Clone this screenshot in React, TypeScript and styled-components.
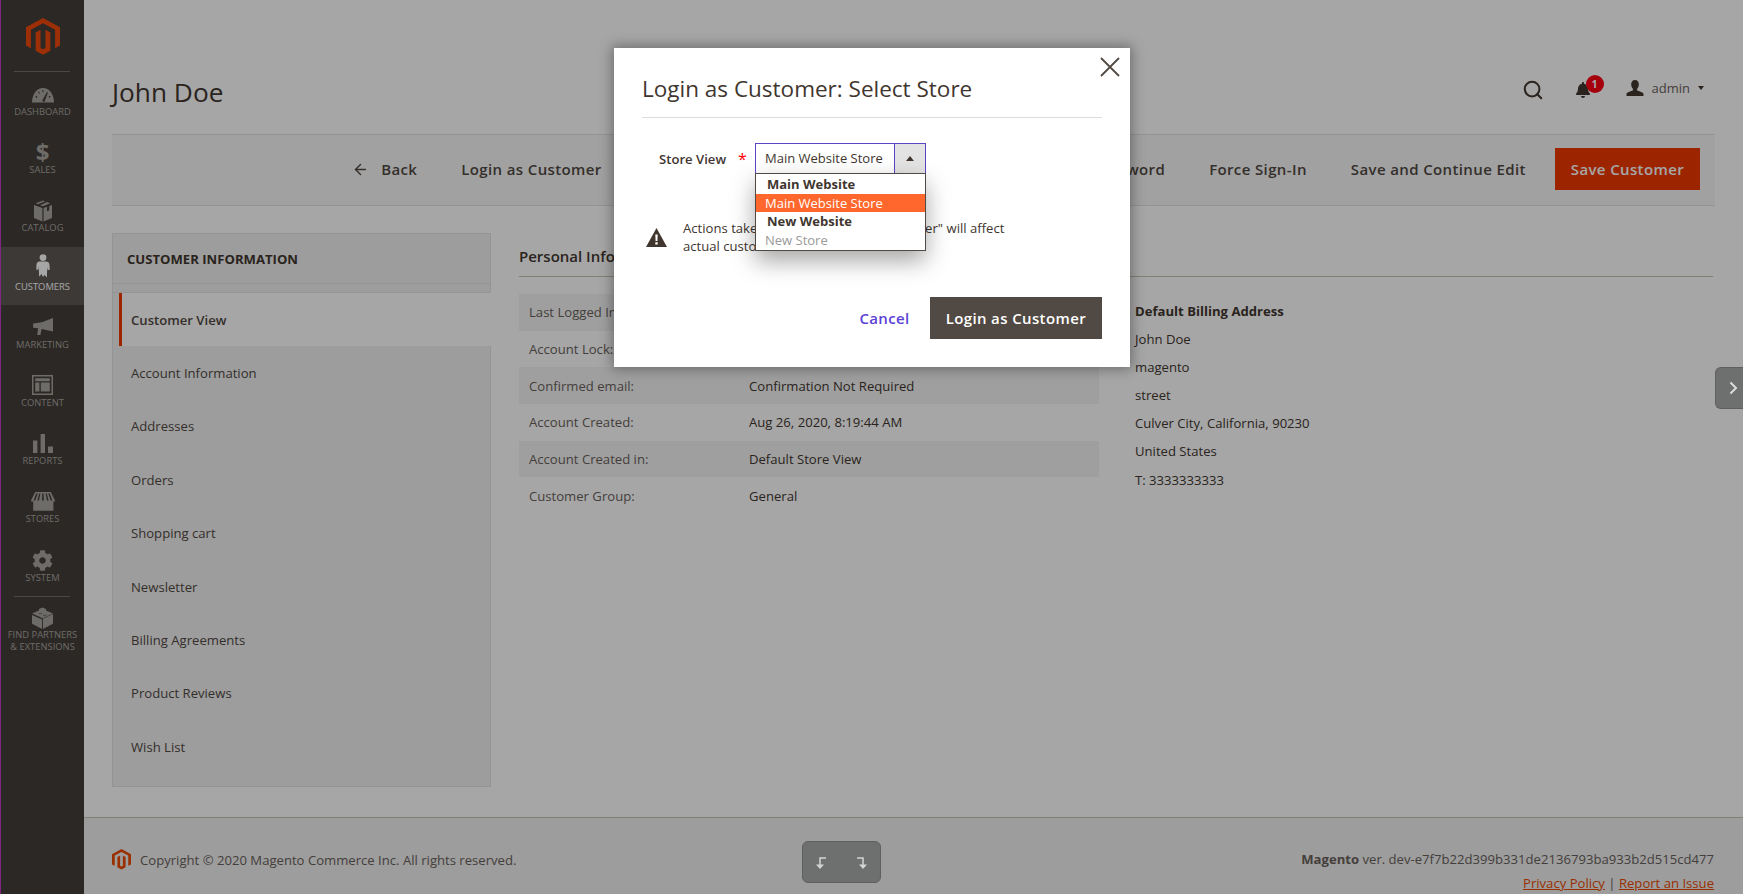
import React from "react";
import styled, { createGlobalStyle } from "styled-components";
import { FaBell, FaCog } from "react-icons/fa";
import { Search, ArrowLeft } from "lucide-react";

const GlobalStyle = createGlobalStyle`
  html, body {
    margin: 0;
    padding: 0;
    height: 894px;
    overflow: hidden;
    background: #fff;
    font-family: "Open Sans", "Liberation Sans", sans-serif;
    color: #41362f;
  }
  * { box-sizing: border-box; }
`;

const MagentoLogo = ({ size, color }: { size: number; color: string }) => (
  <svg width={size} height={size * 1.08} viewBox="1.6 0 20.8 24" preserveAspectRatio="none">
    <path fill={color} d="M12 0 1.6 6v12l3 1.7V7.7L12 3.5l7.4 4.2v12l3-1.7V6z" />
    <path fill={color} d="M13.5 19.6 12 20.5l-1.5-.9V7.7L7.5 9.4v12L12 24l4.5-2.6v-12l-3-1.7z" />
  </svg>
);

const GaugeIcon = () => (
  <svg width="22" height="16" viewBox="0 0 22 16">
    <path fill="currentColor" d="M0 15.5C0 7 5 1 11 1s11 6 11 14.5z" />
    <path fill="#433e3a" d="M10 14 15 5l1 .5-3.6 9.5zM3.2 9.4l1-.6 1.4 1.4-.8.7zM10.5 3h1v2h-1zM6 5l.9-.5 1 1.7-.9.5zM17.8 8.8l1 .6-1.6 1.5-.7-.8z" />
  </svg>
);

const BoxIcon = () => (
  <svg width="20" height="22" viewBox="0 0 20 22">
    <path fill="currentColor" d="M2.8 3.2 10 .5l2 .8L5 4.3zM7 5.2 14.2 2l3 1.2L10 6.2zM1 5l8.4 3v13.4L1 18zM19 5v13l-8.4 3.4V8l3.4-1.2v4.4l2.2-1V6z" />
  </svg>
);

const PersonSvg = styled.svg`
  margin-top: -6px;
`;

const PersonIcon = () => (
  <PersonSvg width="14" height="24" viewBox="0 0 14 24">
    <circle fill="currentColor" cx="7" cy="3.6" r="3.4" />
    <path fill="currentColor" d="M3.6 7.6h6.8c1.8.3 3 1.5 3.1 3.2l.3 5-2.2.3-.4-3.3-.3 10.6-2.4-2.4L7 23l-1.5-3-2.4 2.8-.4-10.6-.4 3.6-2.1-.3.3-5c.1-1.6 1.3-2.6 3.1-2.9z" />
  </PersonSvg>
);

const MegaphoneIcon = () => (
  <svg width="22" height="18" viewBox="0 0 22 18">
    <path fill="currentColor" d="M21 0v13.5L9.6 11 8.4 17H5.2l.9-6.8-5-.4V5.4L10 4.2z" />
  </svg>
);

const ContentIcon = () => (
  <svg width="21" height="20" viewBox="0 0 21 20">
    <path fill="currentColor" fillRule="evenodd" d="M0 0h21v20H0zM1.5 1.5v17h18v-17zM3.2 3.2h14.6v3H3.2zM3.2 7.6h4.2v9H3.2zM8.8 7.6h9v9h-9z" />
  </svg>
);

const BarsIcon = () => (
  <svg width="20" height="19" viewBox="0 0 20 19">
    <path fill="currentColor" d="M0 6.5h4.4V19H0zM7.6 0H12v19H7.6zM15 12.5h5V19h-5z" />
  </svg>
);

const StoreIcon = () => (
  <svg width="24" height="19" viewBox="0 0 24 19">
    <path fill="currentColor" fillRule="evenodd" d="M4.2 0h15.6L24 8.6c0 .8-.8 1.2-1.6 1.2v9H2.2V9.8C.8 9.8 0 9.4 0 8.6zM5.2 1.6 2.6 8.4h1.6l2.6-6.8zM8.2 1.6 6.4 8.4H8l1.4-6.8zM11.2 1.6 11 8.4h1.8l-.2-6.8zM14.6 1.6 16 8.4h1.6l-1.8-6.8zM17.2 1.6l2.6 6.8h1.6l-2.6-6.8z" />
  </svg>
);

const BrickIcon = () => (
  <svg width="21" height="22" viewBox="0 0 21 22">
    <path fill="currentColor" d="M0 6.6 7 3.4V2l3.5-1.6L14 2v1.4l7 3.2v10.2L10.9 22V11.8l-3-1.2v-1l-.8.3zM0 8l10 4.4V22L0 16.8z" />
    <path fill="none" stroke="#433e3a" strokeWidth=".6" d="M6.6 6.2c1 .6 2.6.6 3.6 0M11 8c1 .6 2.6.6 3.6 0M0 6.8l10.4 4.8L21 6.8" />
  </svg>
);

const WarningIcon = () => (
  <svg width="21" height="19" viewBox="0 0 21 19">
    <path fill="#41362f" fillRule="evenodd" d="M10.5 0 21 19H0zM9.3 6.5l.3 6.6h1.8l.3-6.6zM9.3 14.3v2.3h2.4v-2.3z" />
  </svg>
);

const UserIcon = () => (
  <svg width="18" height="16" viewBox="0 0 18 16">
    <path fill="#41362f" d="M9 0c2.4 0 3.8 1.7 3.8 4.2 0 2-.8 3.6-1.7 4.6v1.6c1.8.9 5.4 1.2 6.4 3V16H.5v-2.6c1-1.8 4.6-2.1 6.4-3V8.8C6 7.8 5.2 6.2 5.2 4.2 5.2 1.7 6.6 0 9 0z" />
  </svg>
);

const DollarGlyph = styled.span`
  margin-top: -2px;
  font-size: 24px;
  font-weight: 700;
  line-height: 21px;
`;

const menuItems = [
  { label: "Dashboard", icon: <GaugeIcon /> },
  { label: "Sales", icon: <DollarGlyph>$</DollarGlyph> },
  { label: "Catalog", icon: <BoxIcon /> },
  { label: "Customers", icon: <PersonIcon />, active: true },
  { label: "Marketing", icon: <MegaphoneIcon /> },
  { label: "Content", icon: <ContentIcon /> },
  { label: "Reports", icon: <BarsIcon /> },
  { label: "Stores", icon: <StoreIcon /> },
  { label: "System", icon: <FaCog size={21} /> },
];

const tabs = [
  "Customer View",
  "Account Information",
  "Addresses",
  "Orders",
  "Shopping cart",
  "Newsletter",
  "Billing Agreements",
  "Product Reviews",
  "Wish List",
];

const details = [
  ["Last Logged In:", "Never (Offline)"],
  ["Account Lock:", "Unlocked"],
  ["Confirmed email:", "Confirmation Not Required"],
  ["Account Created:", "Aug 26, 2020, 8:19:44 AM"],
  ["Account Created in:", "Default Store View"],
  ["Customer Group:", "General"],
];

const address = ["John Doe", "magento", "street", "Culver City, California, 90230", "United States", "T: 3333333333"];

const App = () => {
  return (
    <>
      <GlobalStyle />
      <Page>
        <Sidebar>
          <LogoBox>
            <MagentoLogo size={34} color="#f1490c" />
          </LogoBox>
          <Separator />
          {menuItems.map((item) => (
            <MenuItem key={item.label} $active={item.active}>
              <MenuIcon>{item.icon}</MenuIcon>
              <span>{item.label}</span>
            </MenuItem>
          ))}
          <Separator />
          <PartnersItem>
            <MenuIcon>
              <BrickIcon />
            </MenuIcon>
            <span>
              Find Partners
              <br />& Extensions
            </span>
          </PartnersItem>
        </Sidebar>

        <Main>
          <PageHeader>
            <Title>John Doe</Title>
            <HeaderTools>
              <Search size={22} strokeWidth={2.2} color="#41362f" />
              <BellWrap>
                <FaBell size={16} color="#41362f" />
                <Badge>1</Badge>
              </BellWrap>
              <UserMenu>
                <UserIcon />
                <span>admin</span>
                <Caret />
              </UserMenu>
            </HeaderTools>
          </PageHeader>

          <Toolbar>
            <ToolbarButton>
              <ArrowLeft size={17} strokeWidth={2} />
              Back
            </ToolbarButton>
            <ToolbarButton>Login as Customer</ToolbarButton>
            <ToolbarButton>Delete Customer</ToolbarButton>
            <HiddenGapButton>Create Order</HiddenGapButton>
            <ToolbarButton>Reset Password</ToolbarButton>
            <ToolbarButton>Force Sign-In</ToolbarButton>
            <ToolbarButton>Save and Continue Edit</ToolbarButton>
            <PrimaryButton>Save Customer</PrimaryButton>
          </Toolbar>

          <Columns>
            <TabsPanel>
              <TabsTitle>Customer Information</TabsTitle>
              <TabsList>
                {tabs.map((tab, i) => (
                  <TabItem key={tab} $active={i === 0}>
                    {tab}
                  </TabItem>
                ))}
              </TabsList>
            </TabsPanel>

            <Details>
              <DetailsHeading>Personal Information</DetailsHeading>
              <DetailsBody>
                <InfoTable>
                  {details.map(([label, value]) => (
                    <InfoRow key={label}>
                      <InfoLabel>{label}</InfoLabel>
                      <span>{value}</span>
                    </InfoRow>
                  ))}
                </InfoTable>
                <Address>
                  <strong>Default Billing Address</strong>
                  {address.map((line) => (
                    <div key={line}>{line}</div>
                  ))}
                </Address>
              </DetailsBody>
            </Details>
          </Columns>

          <Footer>
            <Copyright>
              <MagentoLogo size={19} color="#eb4a02" />
              Copyright © 2020 Magento Commerce Inc. All rights reserved.
            </Copyright>
            <Legal>
              <div>
                <strong>Magento</strong> ver. dev-e7f7b22d399b331de2136793ba933b2d515cd477
              </div>
              <div>
                <FooterLink>Privacy Policy</FooterLink> | <FooterLink>Report an Issue</FooterLink>
              </div>
            </Legal>
          </Footer>
        </Main>

        <Overlay />

        <UndoBar>
          <svg width="11" height="13" viewBox="0 0 11 13">
            <path fill="none" stroke="#d4d4d4" strokeWidth="1.5" d="M10 2H4v8" />
            <path fill="#d4d4d4" d="M0 8.6h8L4 13z" />
          </svg>
          <svg width="11" height="13" viewBox="0 0 11 13">
            <path fill="none" stroke="#d4d4d4" strokeWidth="1.5" d="M1 2h6v8" />
            <path fill="#d4d4d4" d="M3 8.6h8L7 13z" />
          </svg>
        </UndoBar>

        <SideHandle>
          <svg width="9" height="14" viewBox="0 0 9 14">
            <path fill="none" stroke="#dcdcdc" strokeWidth="2" d="M1.5 1.5 7 7l-5.5 5.5" />
          </svg>
        </SideHandle>

        <Modal>
          <CloseButton>
            <svg width="20" height="20" viewBox="0 0 20 20">
              <path fill="none" stroke="#514943" strokeWidth="1.8" d="M1 1l18 18M19 1 1 19" />
            </svg>
          </CloseButton>
          <ModalTitle>Login as Customer: Select Store</ModalTitle>
          <FieldRow>
            <FieldLabel>Store View</FieldLabel>
            <Star>*</Star>
            <SelectBox>
              <SelectValue>Main Website Store</SelectValue>
              <SelectArrow />
              <Dropdown>
                <GroupOption>Main Website</GroupOption>
                <Option $selected>Main Website Store</Option>
                <GroupOption>New Website</GroupOption>
                <Option $muted>New Store</Option>
              </Dropdown>
            </SelectBox>
          </FieldRow>
          <Message>
            <WarningIcon />
            <MessageText>Actions taken while in "Login as Customer" will affect actual customer data.</MessageText>
          </Message>
          <ModalActions>
            <CancelButton>Cancel</CancelButton>
            <DarkButton>Login as Customer</DarkButton>
          </ModalActions>
        </Modal>
      </Page>
    </>
  );
};

export default App;

//STYLED

const Page = styled.div`
  position: relative;
  display: flex;
  width: 1743px;
  height: 894px;
  overflow: hidden;
`;

const Sidebar = styled.nav`
  width: 84px;
  flex-shrink: 0;
  background: #433e3a;
  border-left: 1px solid #c53bc5;
  color: #aaa6a0;
`;

const LogoBox = styled.div`
  height: 71px;
  padding: 18px 0 0 25px;
`;

const Separator = styled.div`
  height: 1px;
  margin: 0 14px 0 13px;
  background: #736e69;
`;

const MenuItem = styled.div<{ $active?: boolean }>`
  height: 58.2px;
  padding-top: 12px;
  display: flex;
  flex-direction: column;
  align-items: center;
  font-size: 9.4px;
  line-height: 14px;
  text-transform: uppercase;
  text-align: center;
  background: ${(p) => (p.$active ? "#5e5853" : "transparent")};
  color: ${(p) => (p.$active ? "#fff" : "#aaa6a0")};
`;

const PartnersItem = styled(MenuItem)`
  padding-top: 11px;
  height: auto;
  line-height: 12px;
`;

const MenuIcon = styled.div`
  height: 21px;
  display: flex;
  align-items: center;
  justify-content: center;
`;

const Main = styled.main`
  flex: 1;
  min-width: 0;
  display: flex;
  flex-direction: column;
`;

const PageHeader = styled.header`
  height: 134px;
  padding: 73px 39px 0 28px;
  display: flex;
  justify-content: space-between;
  align-items: flex-start;
`;

const Title = styled.h1`
  margin: 0;
  font-size: 26.25px;
  line-height: 38px;
  font-weight: 400;
`;

const HeaderTools = styled.div`
  margin: 6px 0 0;
  display: flex;
  align-items: center;
  gap: 31px;
`;

const BellWrap = styled.div`
  position: relative;
  display: flex;
  margin-right: 4px;
`;

const Badge = styled.span`
  position: absolute;
  top: -7px;
  left: 11px;
  width: 18px;
  height: 18px;
  border-radius: 50%;
  background: #ff0014;
  color: #fff;
  font-size: 10.5px;
  font-weight: 700;
  line-height: 18px;
  text-align: center;
`;

const UserMenu = styled.div`
  margin-top: -4px;
  display: flex;
  align-items: center;
  gap: 8px;
  font-size: 13px;
  color: #6a625c;
`;

const Caret = styled.i`
  border: 3.5px solid transparent;
  border-top: 4px solid #41362f;
  border-bottom: 0;
`;

const Toolbar = styled.div`
  height: 72px;
  margin: 0 28px;
  padding: 0 15px 2px;
  display: flex;
  align-items: center;
  justify-content: flex-end;
  gap: 44px;
  background: #f8f8f8;
  border-top: 1px solid #e3e3e3;
  border-bottom: 1px solid #e3e3e3;
  white-space: nowrap;
`;

const ToolbarButton = styled.span`
  display: inline-flex;
  align-items: center;
  gap: 12px;
  font-size: 15px;
  font-weight: 600;
  letter-spacing: 0.025em;
  color: #514943;
`;

const HiddenGapButton = styled(ToolbarButton)`
  margin-right: 86px;
`;

const PrimaryButton = styled.span`
  margin-left: -15px;
  height: 42px;
  padding: 0 16px;
  display: flex;
  align-items: center;
  background: #f03a00;
  color: #fff;
  font-size: 15px;
  font-weight: 600;
  letter-spacing: 0.025em;
`;

const Columns = styled.div`
  flex: 1;
  min-height: 0;
  padding: 27px 30px 0 28px;
  display: flex;
  gap: 28px;
`;

const TabsPanel = styled.aside`
  position: relative;
  width: 379px;
  height: 554px;
  flex-shrink: 0;
  background: #f1f1f1;
  border: 1px solid #e3e3e3;
`;

const TabsTitle = styled.div`
  height: 50px;
  padding-left: 14px;
  display: flex;
  align-items: center;
  font-size: 13.125px;
  font-weight: 700;
  text-transform: uppercase;
  border-bottom: 1px solid #e3e3e3;
`;

const TabsList = styled.div`
  margin-top: 8px;
  border-top: 1px solid #e3e3e3;
`;

const TabItem = styled.div<{ $active?: boolean }>`
  height: 53.4px;
  padding-left: 9px;
  margin-left: 6px;
  margin-right: -1px;
  display: flex;
  align-items: center;
  font-size: 13.125px;
  color: #514943;
  font-weight: ${(p) => (p.$active ? 600 : 400)};
  background: ${(p) => (p.$active ? "#ffffff" : "transparent")};
  border-left: 3px solid ${(p) => (p.$active ? "#f03a00" : "transparent")};
`;

const Details = styled.section`
  flex: 1;
  min-width: 0;
  padding-top: 1px;
`;

const DetailsHeading = styled.h2`
  margin: 0 0 17px;
  height: 43px;
  padding-top: 10px;
  font-size: 15px;
  line-height: 24px;
  font-weight: 600;
  color: #41362f;
  border-bottom: 1px solid #cac3b4;
`;

const DetailsBody = styled.div`
  display: flex;
  gap: 36px;
`;

const InfoTable = styled.div`
  width: 580px;
`;

const InfoRow = styled.div`
  height: 36.7px;
  padding-left: 10px;
  display: flex;
  align-items: center;
  font-size: 13.125px;
  color: #41362f;

  &:nth-child(odd) {
    background: #f5f5f5;
  }
`;

const InfoLabel = styled.span`
  width: 220px;
  color: #6a625c;
`;

const Address = styled.address`
  padding-top: 3px;
  font-style: normal;
  font-size: 13.125px;
  line-height: 28.1px;
  color: #41362f;

  strong {
    font-weight: 700;
  }
`;

const Footer = styled.footer`
  height: 77px;
  margin-top: auto;
  padding: 29px 29px 0 28px;
  display: flex;
  justify-content: space-between;
  background: #f1f1f1;
  border-top: 1px solid #cac3b4;
  color: #6a625c;
`;

const Copyright = styled.div`
  display: flex;
  align-items: flex-start;
  gap: 9px;
  line-height: 26px;
  font-size: 13.125px;

  svg {
    margin-top: 2px;
  }
`;

const Legal = styled.div`
  text-align: right;
  line-height: 24px;
  font-size: 13.125px;

  strong {
    font-weight: 700;
  }
`;

const FooterLink = styled.a`
  color: #eb4a02;
  text-decoration: underline;
`;

const UndoBar = styled.div`
  position: absolute;
  left: 802px;
  top: 841px;
  width: 79px;
  height: 42px;
  display: flex;
  align-items: center;
  justify-content: center;
  gap: 29px;
  background: #6e706f;
  border: 1px solid #5f5f5f;
  border-radius: 6px;
`;

const SideHandle = styled.div`
  position: absolute;
  right: 0;
  top: 367px;
  width: 28px;
  height: 42px;
  padding-left: 13px;
  display: flex;
  align-items: center;
  background: #6e706f;
  border: 1px solid #5f5f5f;
  border-right: 0;
  border-radius: 6px 0 0 6px;
`;

const Overlay = styled.div`
  position: absolute;
  inset: 0;
  background: rgba(0, 0, 0, 0.35);
`;

const Modal = styled.div`
  position: absolute;
  left: 614px;
  top: 48px;
  width: 516px;
  height: 319px;
  padding: 0 28px;
  background: #fff;
  box-shadow: 0 0 12px 2px rgba(0, 0, 0, 0.35);
`;

const CloseButton = styled.div`
  position: absolute;
  top: 9px;
  right: 10px;
  display: flex;
`;

const ModalTitle = styled.h1`
  margin: 0;
  height: 70px;
  padding-top: 25px;
  font-size: 22.5px;
  line-height: 32px;
  font-weight: 400;
  color: #41362f;
  border-bottom: 1px solid #dcdcdc;
`;

const FieldRow = styled.div`
  margin-top: 25px;
  padding-left: 17px;
  display: flex;
  align-items: center;
  font-size: 13.125px;
`;

const FieldLabel = styled.label`
  width: 67px;
  font-weight: 600;
  color: #41362f;
  white-space: nowrap;
`;

const Star = styled.span`
  width: 29px;
  padding-left: 12px;
  font-size: 16px;
  line-height: 18px;
  color: #ff0000;
`;

const SelectBox = styled.div`
  position: relative;
  width: 171px;
  height: 31px;
  display: flex;
  border: 1px solid #5c44c4;
  background: #fff;
`;

const SelectValue = styled.div`
  flex: 1;
  padding-left: 9px;
  font-size: 13px;
  line-height: 29px;
  color: #41362f;
  white-space: nowrap;
`;

const SelectArrow = styled.div`
  position: relative;
  width: 31px;
  background: #e3e3e3;
  border-left: 1px solid #5c44c4;

  &::after {
    content: "";
    position: absolute;
    left: 11px;
    top: 12px;
    border: 4px solid transparent;
    border-bottom: 5px solid #41362f;
    border-top: 0;
  }
`;

const Dropdown = styled.div`
  position: absolute;
  left: -1px;
  top: 29px;
  width: 171px;
  padding-top: 1px;
  background: #fff;
  border: 1px solid #514943;
  z-index: 2;
  box-shadow: 0 10px 22px rgba(0, 0, 0, 0.35);
`;

const GroupOption = styled.div`
  height: 18.7px;
  padding-left: 11px;
  font-size: 13px;
  line-height: 18px;
  font-weight: 700;
  color: #41362f;
`;

const Option = styled.div<{ $selected?: boolean; $muted?: boolean }>`
  height: 18.7px;
  padding-left: 9px;
  font-size: 13px;
  line-height: 18px;
  background: ${(p) => (p.$selected ? "#ff672c" : "transparent")};
  color: ${(p) => (p.$selected ? "#fff" : p.$muted ? "#999" : "#41362f")};
`;

const Message = styled.div`
  margin-top: 45px;
  padding-left: 4px;
  display: flex;
  align-items: center;
  gap: 16px;
`;

const MessageText = styled.div`
  width: 330px;
  font-size: 13.125px;
  line-height: 18px;
  color: #41362f;
`;

const ModalActions = styled.div`
  position: absolute;
  right: 28px;
  bottom: 28px;
  display: flex;
  align-items: center;
  gap: 20px;
`;

const CancelButton = styled.span`
  font-size: 15px;
  font-weight: 600;
  letter-spacing: 0.025em;
  color: #5c3fd6;
`;

const DarkButton = styled.span`
  height: 42px;
  padding: 0 16px;
  display: flex;
  align-items: center;
  background: #514943;
  color: #fff;
  font-size: 15px;
  font-weight: 600;
  letter-spacing: 0.025em;
`;
